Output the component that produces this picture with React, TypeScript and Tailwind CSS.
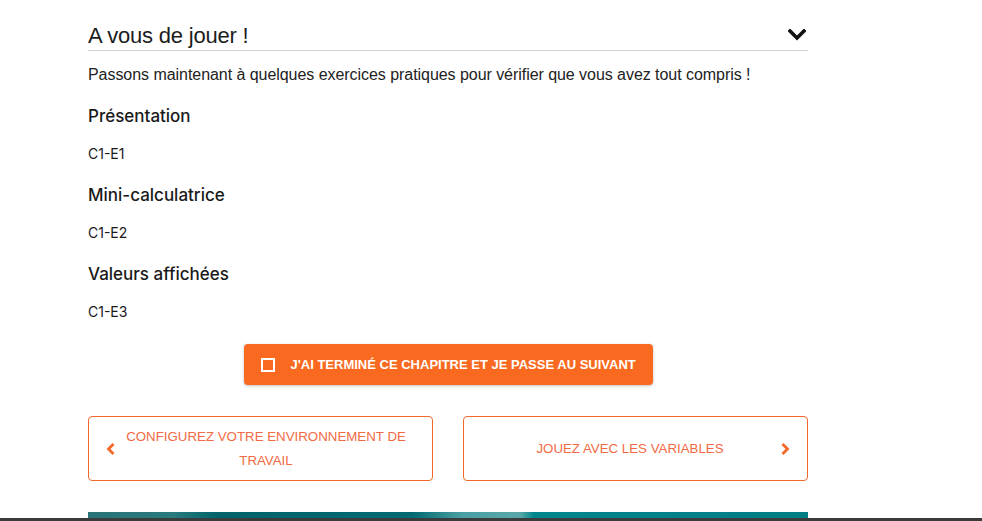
import React from 'react';

const exercises = [
  { title: 'Présentation', code: 'C1-E1' },
  { title: 'Mini-calculatrice', code: 'C1-E2' },
  { title: 'Valeurs affichées', code: 'C1-E3' },
];

const ChevronDown = () => (
  <svg width="18" height="12" viewBox="0 0 18 12" fill="none">
    <polyline points="2,2 9,9 16,2" stroke="#111" strokeWidth="3.6" strokeLinecap="square" />
  </svg>
);

const ChevronSide = ({ dir }: { dir: 'left' | 'right' }) => (
  <svg width="10" height="14" viewBox="0 0 10 14" fill="none">
    {dir === 'left' ? (
      <polyline points="7.5,2 2.5,7 7.5,12" stroke="#f3682a" strokeWidth="2.8" />
    ) : (
      <polyline points="2.5,2 7.5,7 2.5,12" stroke="#f3682a" strokeWidth="2.8" />
    )}
  </svg>
);

export default function App() {
  return (
    <div className="flex h-[521px] flex-col overflow-hidden bg-white">
      <div className="ml-[88px] w-[720px]">
        {/* section header */}
        <div className="mt-[22px] flex h-[29px] items-center justify-between border-b border-[#d4d4d4]">
          <h2 className="font-['Liberation_Sans',sans-serif] text-[22px] leading-[28px] tracking-[-0.2px] text-[#1c1c1c]">
            A vous de jouer !
          </h2>
          <div className="mr-[2px] mb-[2px]">
            <ChevronDown />
          </div>
        </div>

        <p className="mt-[13px] font-['Liberation_Sans',sans-serif] text-[16px] leading-[22px] tracking-[-0.05px] text-[#222]">
          Passons maintenant à quelques exercices pratiques pour vérifier que vous avez tout compris !
        </p>

        <div className="mt-[18px] flex flex-col gap-[19px] font-['Inter',sans-serif] text-[#1a1a1a]">
          {exercises.map((ex) => (
            <div key={ex.code} className="flex flex-col gap-[16px]">
              <h3 className="text-[17px] font-medium leading-[24px]">{ex.title}</h3>
              <div className="text-[14px] leading-[20px]">{ex.code}</div>
            </div>
          ))}
        </div>

        <div className="mt-[22px] flex justify-center">
          <button className="flex h-[41px] w-[409px] items-center gap-[16px] rounded-[4px] bg-[#f96a20] pl-[17px] shadow-[0_1px_3px_rgba(0,0,0,0.25)]">
            <span className="h-[14px] w-[14px] border-2 border-white" />
            <span className="font-['Liberation_Sans',sans-serif] text-[13px] font-bold text-white">
              J'AI TERMINÉ CE CHAPITRE ET JE PASSE AU SUIVANT
            </span>
          </button>
        </div>

        <div className="mt-[31px] flex justify-between">
          <a className="flex h-[65px] w-[345px] items-center rounded-[4px] border border-[#f3682a] pl-[17px] pr-[16px]">
            <ChevronSide dir="left" />
            <span className="flex-1 text-center font-['Liberation_Sans',sans-serif] text-[13.3px] leading-[24px] text-[#f26a45]">
              CONFIGUREZ VOTRE ENVIRONNEMENT DE
              <br />
              TRAVAIL
            </span>
          </a>
          <a className="flex h-[65px] w-[345px] items-center rounded-[4px] border border-[#f3682a] pl-[16px] pr-[17px]">
            <span className="flex-1 text-center font-['Liberation_Sans',sans-serif] text-[13.3px] leading-[24px] text-[#f26a45]">
              JOUEZ AVEC LES VARIABLES
            </span>
            <ChevronSide dir="right" />
          </a>
        </div>

        <div className="mt-[31px] h-[6px] bg-[linear-gradient(90deg,#2a7377_0%,#2a7a7e_12%,#00636b_18%,#006a72_45%,#4a9fa2_52%,#59a7a9_60%,#00868c_62%,#007e84_100%)]" />
      </div>
      <div className="h-[4px] w-full bg-[#3b3b3b]" />
    </div>
  );
}
